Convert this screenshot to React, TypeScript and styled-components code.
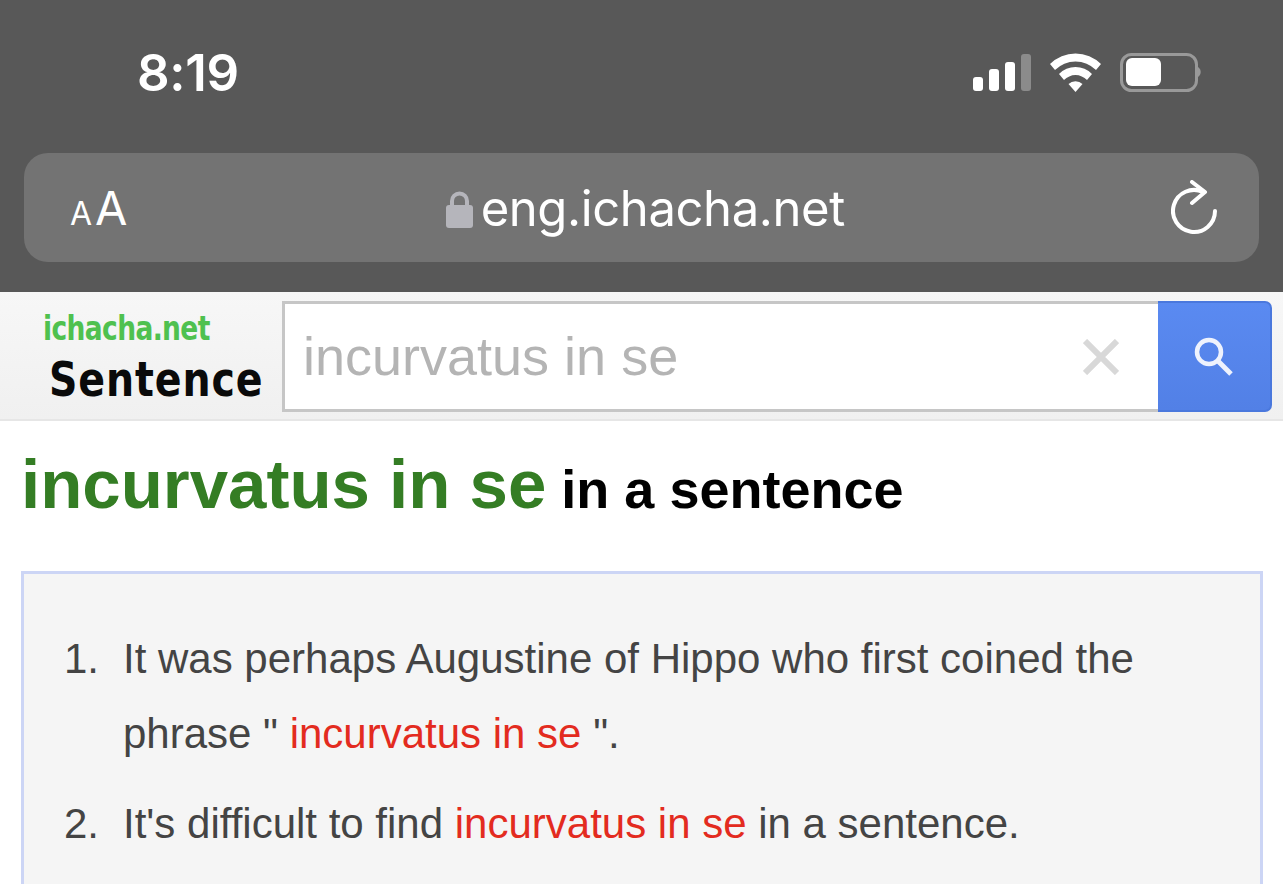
import React from "react";
import styled, { createGlobalStyle } from "styled-components";

const Global = createGlobalStyle`
  html, body { margin: 0; padding: 0; background: #fff; }
  body { width: 1283px; height: 884px; overflow: hidden; font-family: "Liberation Sans", Arial, sans-serif; }
`;

const Page = styled.div`
  width: 1283px;
  height: 884px;
  overflow: hidden;
  display: flex;
  flex-direction: column;
`;

const Chrome = styled.header`
  height: 292px;
  box-sizing: border-box;
  flex: none;
  background: #585858;
  padding: 0 24px 30px;
  display: flex;
  flex-direction: column;
  justify-content: flex-end;
  gap: 50px;
`;

const StatusBar = styled.div`
  display: flex;
  align-items: center;
  justify-content: space-between;
  height: 60px;
  padding: 0 57px 0 113px;
`;

const Clock = styled.div`
  font-family: Inter, "Liberation Sans", sans-serif;
  font-size: 51px;
  font-weight: 600;
  color: #fff;
  line-height: 60px;
  letter-spacing: -0.3px;
`;

const StatusIcons = styled.div`
  display: flex;
  align-items: center;
`;

const AddressBar = styled.div`
  height: 109px;
  border-radius: 24px;
  background: #737373;
  display: flex;
  align-items: center;
  justify-content: space-between;
  padding: 0 42px 0 46px;
  color: #fff;
`;

const TextSize = styled.div`
  font-family: Inter, "Liberation Sans", sans-serif;
  font-weight: 400;
  display: flex;
  align-items: baseline;
  line-height: 1;
`;

const SmallA = styled.span`
  font-size: 32px;
  margin-right: 3px;
`;

const BigA = styled.span`
  font-size: 47px;
`;

const Url = styled.div`
  display: flex;
  align-items: center;
  gap: 8px;
  margin-right: 8px;
  padding-top: 2px;
  font-family: Inter, "Liberation Sans", sans-serif;
  font-size: 49px;
  letter-spacing: -0.4px;
  line-height: 56px;
`;

const SearchHeader = styled.div`
  height: 129px;
  box-sizing: border-box;
  flex: none;
  background: linear-gradient(#f7f7f7, #f0f0f0);
  border-bottom: 2px solid #e6e6e6;
  display: flex;
  align-items: flex-start;
  padding: 9px 11px 0 0;
`;

const Logo = styled.div`
  width: 282px;
  height: 112px;
  flex: none;
  display: flex;
  flex-direction: column;
  font-family: "DejaVu Sans", sans-serif;
  font-weight: 700;
  font-stretch: condensed;
  padding: 8px 0 0 43px;
  box-sizing: border-box;
  white-space: nowrap;
`;

const LogoSite = styled.div`
  color: #4fc14f;
  font-size: 33px;
  line-height: 40px;
  letter-spacing: -0.7px;
  transform: scaleX(0.893);
  transform-origin: left center;
`;

const LogoWord = styled.div`
  color: #0a0a0a;
  font-size: 48px;
  line-height: 60px;
  margin-left: 6px;
  letter-spacing: 1px;
  transform: scaleX(0.914);
  transform-origin: left center;
`;

const SearchField = styled.div`
  flex: 1;
  height: 111px;
  box-sizing: border-box;
  background: #fff;
  border: 3px solid #c6c6c6;
  border-right: none;
  display: flex;
  align-items: center;
  justify-content: space-between;
  padding: 0 39px 0 18px;
`;

const SearchText = styled.div`
  color: #b4b4b4;
  font-size: 54px;
  line-height: 60px;
  margin-top: -1px;
`;

const SearchButton = styled.div`
  width: 114px;
  height: 111px;
  flex: none;
  box-sizing: border-box;
  background: linear-gradient(#5a8af1, #5280e6);
  border: 2px solid #4a78dd;
  border-left: none;
  border-radius: 0 7px 7px 0;
  display: flex;
  align-items: center;
  justify-content: center;
`;

const Content = styled.main`
  flex: 1;
  padding: 26px 20px 0 21px;
  min-height: 0;
`;

const Heading = styled.h1`
  margin: 0 0 44px;
  font-size: 54px;
  line-height: 76px;
  font-weight: 700;
  color: #000;
  white-space: nowrap;
`;

const Term = styled.span`
  color: #347d24;
  font-size: 69px;
`;

const Box = styled.section`
  border: 3px solid #ccd5f5;
  background: #f5f5f5;
  padding: 47px 0 0 40px;
  height: 400px;
  box-sizing: border-box;
`;

const List = styled.ol`
  list-style: none;
  margin: 0;
  padding: 0;
  color: #444;
  font-size: 42px;
`;

const Item = styled.li`
  display: flex;
  line-height: 75px;
  margin-bottom: 15px;
`;

const Num = styled.span`
  width: 59px;
  flex: none;
`;

const Hit = styled.span`
  color: #e32b20;
`;

export default function App() {
  return (
    <Page>
      <Global />
      <Chrome>
        <StatusBar>
          <Clock>8:19</Clock>
          <StatusIcons>
            <svg width="232" height="44" viewBox="0 1 232 44">
              <rect x="3" y="27" width="10" height="14" rx="3" fill="#fff" />
              <rect x="19" y="19" width="10" height="22" rx="3" fill="#fff" />
              <rect x="35" y="12" width="10" height="29" rx="3" fill="#fff" />
              <rect x="51" y="4" width="10" height="37" rx="3" fill="#8b8b8b" />
              <path d="M80 14 A36 36 0 0 1 131 14 L126 20 A29 29 0 0 0 85 20 Z" fill="#fff" />
              <path d="M89 24 A23 23 0 0 1 122 24 L117 30 A16 16 0 0 0 94 30 Z" fill="#fff" />
              <path d="M98.500 34 A10 10 0 0 1 112.500 34 L105.500 42 Z" fill="#fff" />
              <rect x="151.500" y="4.500" width="75" height="36" rx="10" fill="none" stroke="#999" strokeWidth="3" />
              <rect x="156" y="8" width="35" height="28" rx="6" fill="#fff" />
              <path d="M228 17 A6 6 0 0 1 228 27 Z" fill="#999" />
            </svg>
          </StatusIcons>
        </StatusBar>
        <AddressBar>
          <TextSize>
            <SmallA>A</SmallA>
            <BigA>A</BigA>
          </TextSize>
          <Url>
            <svg width="27" height="38" viewBox="0 0 27 38">
              <path d="M6 18 V11 A7.500 7.500 0 0 1 21 11 V18" fill="none" stroke="#b5b5bb" strokeWidth="4" />
              <rect x="0" y="15" width="27" height="23" rx="3" fill="#b5b5bb" />
            </svg>
            eng.ichacha.net
          </Url>
          <svg width="46" height="56" viewBox="0 0 46 56">
            <path d="M44 31 A21 21 0 1 1 32 12" fill="none" stroke="#fff" strokeWidth="4" strokeLinecap="round" />
            <path d="M21 2 L34 12 L21 23" fill="none" stroke="#fff" strokeWidth="4" strokeLinecap="round" strokeLinejoin="round" />
          </svg>
        </AddressBar>
      </Chrome>
      <SearchHeader>
        <Logo>
          <LogoSite>ichacha.net</LogoSite>
          <LogoWord>Sentence</LogoWord>
        </Logo>
        <SearchField>
          <SearchText>incurvatus in se</SearchText>
          <svg width="36" height="36" viewBox="0 0 36 36">
            <path d="M2 2 L34 34 M34 2 L2 34" stroke="#d8d8d8" strokeWidth="6" />
          </svg>
        </SearchField>
        <SearchButton>
          <svg width="42" height="42" viewBox="0 0 42 42">
            <circle cx="16" cy="16" r="12" fill="none" stroke="#eef2fd" strokeWidth="4.500" />
            <path d="M25 25 L38 38" stroke="#eef2fd" strokeWidth="5" />
          </svg>
        </SearchButton>
      </SearchHeader>
      <Content>
        <Heading>
          <Term>incurvatus in se</Term> in a sentence
        </Heading>
        <Box>
          <List>
            <Item>
              <Num>1.</Num>
              <div>
                It was perhaps Augustine of Hippo who first coined the
                <br />
                phrase " <Hit>incurvatus in se</Hit> ".
              </div>
            </Item>
            <Item>
              <Num>2.</Num>
              <div>
                It's difficult to find <Hit>incurvatus in se</Hit> in a sentence.
              </div>
            </Item>
          </List>
        </Box>
      </Content>
    </Page>
  );
}
